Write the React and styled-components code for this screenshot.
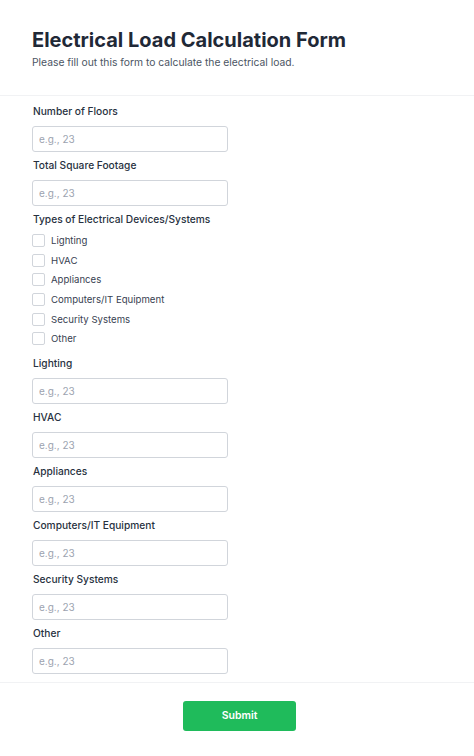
import styled, { createGlobalStyle } from 'styled-components';

const GlobalStyle = createGlobalStyle`
  * { box-sizing: border-box; }
  body {
    margin: 0;
    background: #ffffff;
    font-family: Inter, "Liberation Sans", sans-serif;
    color: #1f2937;
  }
`;

const Page = styled.div`
  width: 474px;
  min-height: 756px;
  display: flex;
  flex-direction: column;
`;

const Header = styled.header`
  padding: 27px 32px 0;
  height: 96px;
  border-bottom: 1px solid #f1f2f4;
`;

const Title = styled.h1`
  margin: 0;
  font-size: 20px;
  line-height: 26px;
  font-weight: 700;
  color: #1f2937;
`;

const Subtitle = styled.p`
  margin: 2px 0 0;
  font-size: 10.3px;
  line-height: 14px;
  color: #4b5563;
`;

const Body = styled.form`
  padding: 7px 32px 3px;
  display: flex;
  flex-direction: column;
  border-bottom: 1px solid #f1f2f4;
`;

const Field = styled.div`
  display: flex;
  flex-direction: column;
  gap: ${(p) => p.$gap || 7}px;
  margin-bottom: ${(p) => p.$after || 5}px;
`;

const Label = styled.label`
  padding-left: 1px;
  font-size: 10.2px;
  line-height: 16px;
  font-weight: 550;
  color: #273140;
`;

const Input = styled.input`
  width: 196px;
  height: 26px;
  border: 1px solid #d1d5db;
  border-radius: 3px;
  padding: 0 6px;
  font-family: inherit;
  font-size: 10px;
  color: #1f2937;
  &::placeholder { color: #9ca3af; }
  &:focus { outline: none; border-color: #22c55e; }
`;

const Options = styled.div`
  display: flex;
  flex-direction: column;
`;

const Option = styled.label`
  height: 19.6px;
  display: flex;
  align-items: center;
  gap: 6px;
  font-size: 9.6px;
  color: #374151;
  cursor: pointer;
`;

const Box = styled.input.attrs({ type: 'checkbox' })`
  appearance: none;
  margin: 0;
  width: 13px;
  height: 13px;
  border: 1px solid #d1d5db;
  border-radius: 2px;
  background: #fff;
  &:checked { background: #22c55e; border-color: #22c55e; }
`;

const Footer = styled.footer`
  display: flex;
  justify-content: center;
  padding: 18px 0 25px;
`;

const Submit = styled.button`
  width: 113px;
  height: 30px;
  margin-left: 5px;
  border: none;
  border-radius: 3px;
  background: #1fbb5b;
  color: #fff;
  font-family: inherit;
  font-size: 10.5px;
  font-weight: 600;
  cursor: pointer;
`;

const devices = [
  'Lighting',
  'HVAC',
  'Appliances',
  'Computers/IT Equipment',
  'Security Systems',
  'Other',
];

const NumberField = ({ label }) => (
  <Field>
    <Label>{label}</Label>
    <Input type="text" placeholder="e.g., 23" />
  </Field>
);

export default function App() {
  return (
    <Page>
      <GlobalStyle />
      <Header>
        <Title>Electrical Load Calculation Form</Title>
        <Subtitle>Please fill out this form to calculate the electrical load.</Subtitle>
      </Header>
      <Body onSubmit={(e) => e.preventDefault()}>
        <NumberField label="Number of Floors" />
        <NumberField label="Total Square Footage" />
        <Field $gap={4} $after={6}>
          <Label>Types of Electrical Devices/Systems</Label>
          <Options>
            {devices.map((d) => (
              <Option key={d}>
                <Box />
                {d}
              </Option>
            ))}
          </Options>
        </Field>
        {devices.map((d) => (
          <NumberField key={d} label={d} />
        ))}
      </Body>
      <Footer>
        <Submit type="button">Submit</Submit>
      </Footer>
    </Page>
  );
}
